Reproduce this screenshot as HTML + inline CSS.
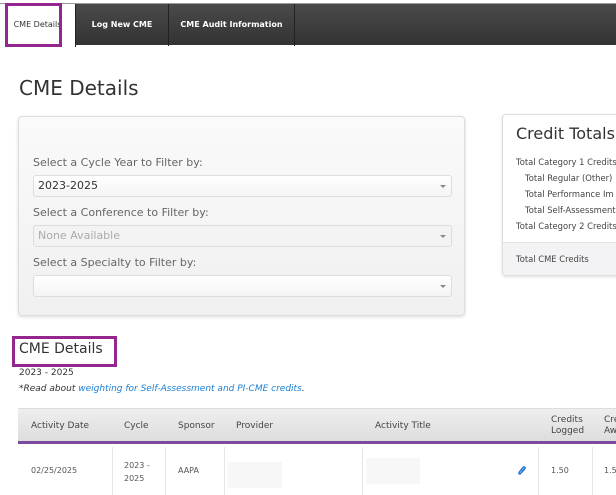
<!DOCTYPE html>
<html><head><style>
*{margin:0;padding:0;box-sizing:border-box}
body{width:616px;height:495px;overflow:hidden;background:#fff;font-family:"DejaVu Sans",Verdana,sans-serif;color:#333;position:relative}
.a{position:absolute}
.nav{left:0;top:3px;width:616px;height:42px;background:linear-gradient(#4a4a4a,#333);border-top:1px solid #999}
.tab{position:absolute;top:0;height:42px;line-height:42px;color:#fff;font-size:8px;font-weight:bold;text-align:center;border-right:1px solid #222}
.lbl{font-size:11px;color:#666;left:14px}
.sel{left:14px;width:419px;height:22px;border:1px solid #ddd;border-radius:3px;background:linear-gradient(#fff,#f4f4f4);font-size:11px;line-height:20px;padding-left:4px}
.sel:after{content:"";position:absolute;right:5px;top:9px;border:3px solid transparent;border-top-color:#888}
.ct{font-size:8.4px;color:#444;left:13px;white-space:nowrap}
</style></head><body>
<div class="a nav">
<div class="tab" style="left:0;width:76px;background:#fff;color:#333;font-weight:normal;height:43px">CME Details</div>
<div class="tab" style="left:76px;width:93px">Log New CME</div>
<div class="tab" style="left:169px;width:126px">CME Audit Information</div>
</div>
<div class="a" style="left:5px;top:3px;width:57px;height:44px;border:3px solid #93278f"></div>
<div class="a" style="left:19px;top:76px;font-size:20px;color:#333">CME Details</div>

<div class="a" style="left:18px;top:116px;width:447px;height:200px;border:1px solid #ddd;border-radius:4px;background:linear-gradient(#fafafa,#f0f0f0);box-shadow:0 1px 3px rgba(0,0,0,.15)">
<div class="a lbl" style="top:39px">Select a Cycle Year to Filter by:</div>
<div class="a sel" style="top:58px;color:#333">2023-2025</div>
<div class="a lbl" style="top:89px">Select a Conference to Filter by:</div>
<div class="a sel" style="top:108px;color:#aaa;background:#f3f3f3">None Available</div>
<div class="a lbl" style="top:139px">Select a Specialty to Filter by:</div>
<div class="a sel" style="top:158px"></div>
</div>

<div class="a" style="left:502px;top:114px;width:130px;height:162px;border:1px solid #ddd;border-radius:4px;background:#fff;overflow:hidden;box-shadow:0 1px 3px rgba(0,0,0,.12)">
<div class="a" style="left:13px;top:9px;font-size:16px;color:#333;white-space:nowrap">Credit Totals</div>
<div class="a ct" style="top:42px">Total Category 1 Credits</div>
<div class="a ct" style="left:22px;top:58px">Total Regular (Other)</div>
<div class="a ct" style="left:22px;top:74px">Total Performance Im</div>
<div class="a ct" style="left:22px;top:90px">Total Self-Assessment</div>
<div class="a ct" style="top:106px">Total Category 2 Credits</div>
<div class="a" style="left:0;top:127px;width:130px;height:35px;background:#f3f3f5;border-top:1px solid #e4e4e4"></div>
<div class="a ct" style="top:139px">Total CME Credits</div>
</div>

<div class="a" style="left:12px;top:336px;width:105px;height:31px;border:3px solid #93278f"></div>
<div class="a" style="left:19px;top:341px;font-size:14px;color:#333">CME Details</div>
<div class="a" style="left:19px;top:368px;font-size:9px">2023 - 2025</div>
<div class="a" style="left:19px;top:384px;font-size:9px;font-style:italic">*Read about <span style="color:#1a7fd4">weighting for Self-Assessment and PI-CME credits</span>.</div>

<div class="a" style="left:18px;top:408px;width:610px;height:36px;background:linear-gradient(#eee,#ddd);border-top:1px solid #ddd;border-bottom:3px solid #7b4a9e"></div>
<div class="a" style="top:447px;left:112px;width:1px;height:48px;background:#e6e6e6"></div>
<div class="a" style="top:447px;left:165px;width:1px;height:48px;background:#e6e6e6"></div>
<div class="a" style="top:447px;left:224px;width:1px;height:48px;background:#e6e6e6"></div>
<div class="a" style="top:447px;left:362px;width:1px;height:48px;background:#e6e6e6"></div>
<div class="a" style="top:447px;left:538px;width:1px;height:48px;background:#e6e6e6"></div>
<div class="a" style="top:447px;left:592px;width:1px;height:48px;background:#e6e6e6"></div>
<div class="a" style="left:228px;top:462px;width:54px;height:26px;background:#f7f7f7"></div>
<div class="a" style="left:366px;top:458px;width:54px;height:26px;background:#f7f7f7"></div>

<div class="a" style="left:31px;top:421px;font-size:9px;color:#444">Activity Date</div>
<div class="a" style="left:124px;top:421px;font-size:9px;color:#444">Cycle</div>
<div class="a" style="left:178px;top:421px;font-size:9px;color:#444">Sponsor</div>
<div class="a" style="left:236px;top:421px;font-size:9px;color:#444">Provider</div>
<div class="a" style="left:375px;top:421px;font-size:9px;color:#444">Activity Title</div>
<div class="a" style="left:551px;top:415px;font-size:9px;color:#444;line-height:11px">Credits<br>Logged</div>
<div class="a" style="left:604px;top:415px;font-size:9px;color:#444;line-height:11px;white-space:nowrap">Credits<br>Awarded</div>

<div class="a" style="left:31px;top:466px;font-size:8px;color:#555">02/25/2025</div>
<div class="a" style="left:124px;top:459px;font-size:8px;color:#555;line-height:13px">2023 -<br>2025</div>
<div class="a" style="left:178px;top:466px;font-size:8px;color:#555">AAPA</div>
<div class="a" style="left:551px;top:466px;font-size:8px;color:#555">1.50</div>
<div class="a" style="left:604px;top:466px;font-size:8px;color:#555">1.50</div>
<svg class="a" style="left:518px;top:466px" width="8" height="10" viewBox="0 0 8 10"><path d="M6 3 L3 7 Q2 8.5 1.2 7.8 Q0.5 7 1.5 5.8 L5 1.5 Q6 0.5 6.8 1.2 Q7.5 2 6.6 3 L3.5 6.5" fill="none" stroke="#1a6fd4" stroke-width="1.4"/></svg>
</body></html>
